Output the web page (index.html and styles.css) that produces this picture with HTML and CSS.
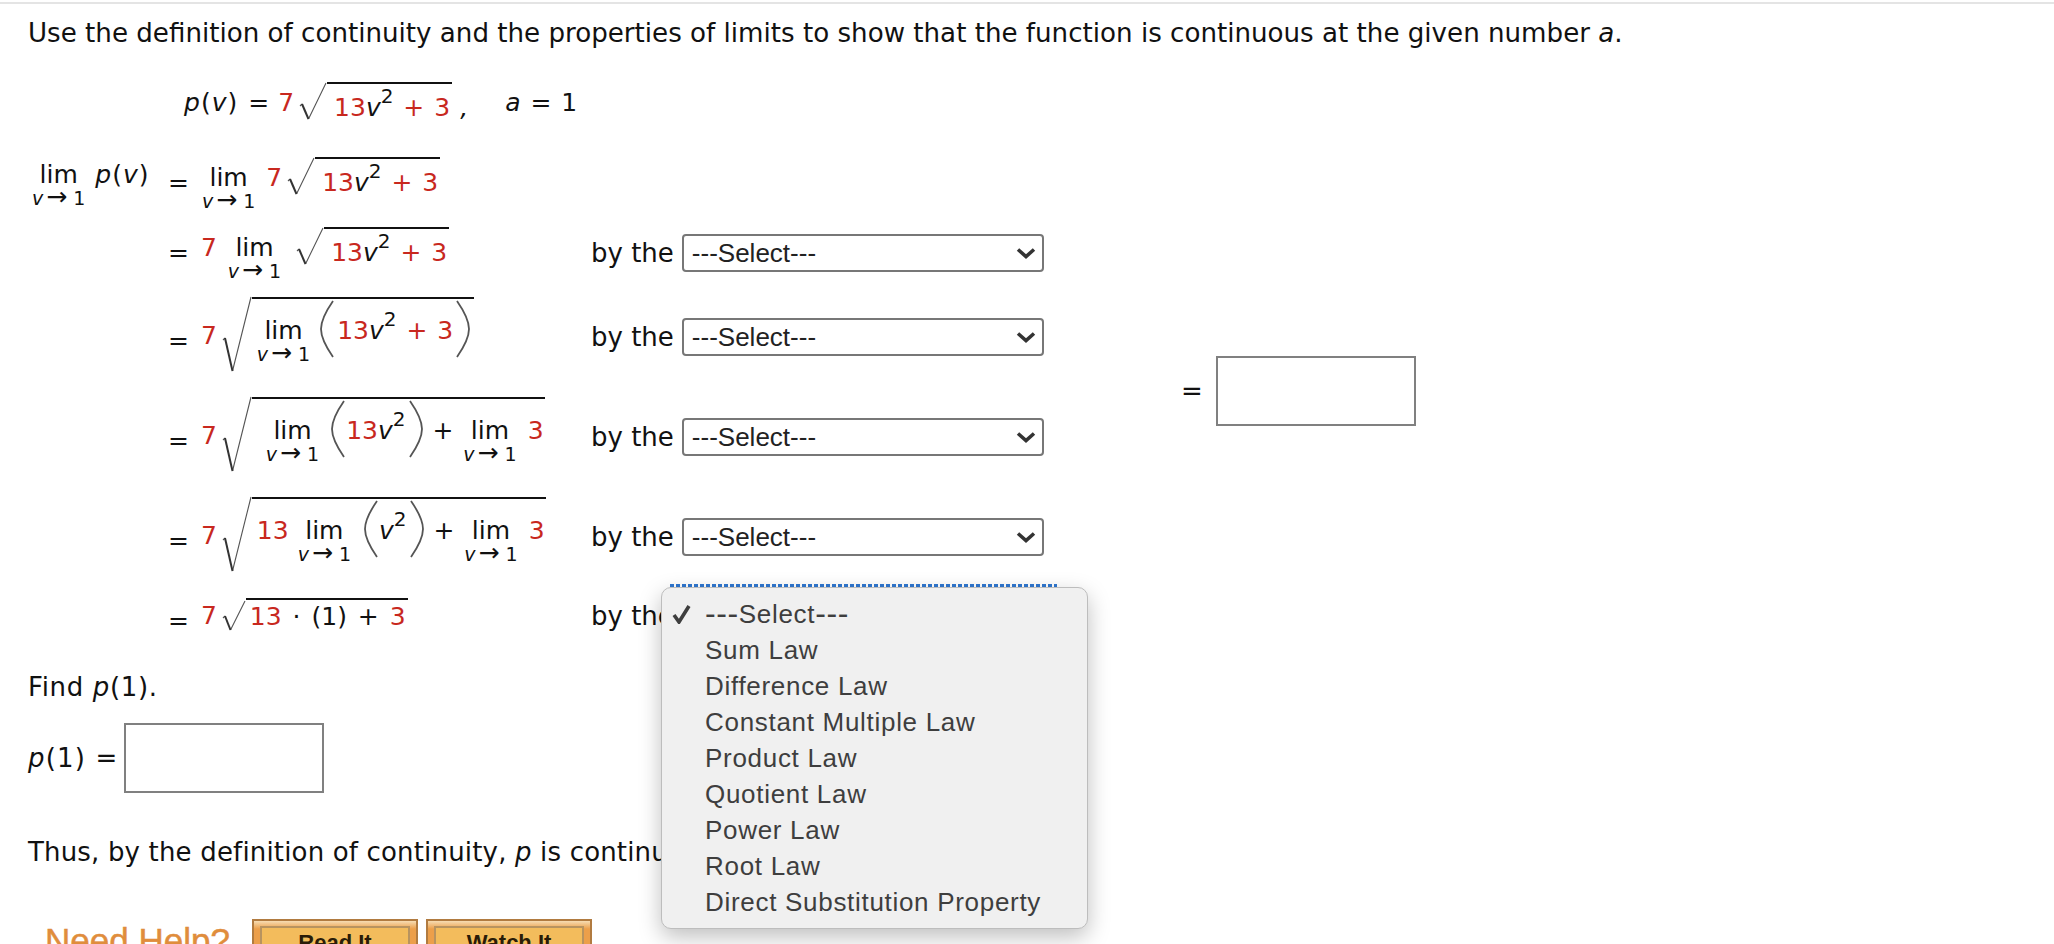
FILE: index.html
```html
<!DOCTYPE html>
<html lang="en">
<head>
<meta charset="utf-8">
<title>Continuity</title>
<link rel="stylesheet" href="styles.css">
</head>
<body>
<div class="topline"></div>
<main class="page">
  <p class="intro">Use the definition of continuity and the properties of limits to show that the function is continuous at the given number <i>a</i>.</p>

  <div class="given">
    <div class="math">
      <span class="pv"><i>p</i>(<i>v</i>)</span><span class="eq eq--g">=</span><span class="r seven">7</span><svg class="radical radical--s" width="28" height="38" viewBox="0 0 28 38"><path class="rad-thin" d="M1 24 L3 22 M9.5 37 L27 1"/><path class="rad-thick" d="M3 22 L9.5 37"/></svg><span class="rad rad--s"><span class="r">13</span><i>v</i><sup>2</sup> <span class="r">+ 3</span></span><span class="comma">,</span><span class="a-eq"><i>a</i> = 1</span>
    </div>
  </div>

  <div class="deriv">
    <div class="lhs"><span class="lim lim--lhs"><span>lim</span><small><i>v</i><b>→</b>1</small></span><span class="pv"><i>p</i>(<i>v</i>)</span></div>
    <div class="math"><span class="eq eq--low">=</span><span class="lim lim--a"><span>lim</span><small><i>v</i><b>→</b>1</small></span><span class="r seven seven--a">7</span><svg class="radical radical--s" width="28" height="38" viewBox="0 0 28 38"><path class="rad-thin" d="M1 24 L3 22 M9.5 37 L27 1"/><path class="rad-thick" d="M3 22 L9.5 37"/></svg><span class="rad rad--s"><span class="r">13</span><i>v</i><sup>2</sup> <span class="r">+ 3</span></span></div>
    <div class="rule-cell"></div>

    <div class="lhs-empty"></div>
    <div class="math"><span class="eq eq--low">=</span><span class="r seven seven--b">7</span><span class="lim lim--b"><span>lim</span><small><i>v</i><b>→</b>1</small></span><svg class="radical radical--s" width="28" height="38" viewBox="0 0 28 38"><path class="rad-thin" d="M1 24 L3 22 M9.5 37 L27 1"/><path class="rad-thick" d="M3 22 L9.5 37"/></svg><span class="rad rad--s"><span class="r">13</span><i>v</i><sup>2</sup> <span class="r">+ 3</span></span></div>
    <div class="rule-cell rule-cell--first"><span class="by">by the</span><span class="sel"><select class="select"><option>---Select---</option></select><svg class="chev" width="20" height="12" viewBox="0 0 20 12"><path d="M2 2.5 L10 9.5 L18 2.5"/></svg></span></div>

    <div class="lhs-empty"></div>
    <div class="math"><span class="eq eq--low">=</span><span class="r seven seven--b">7</span><svg class="radical radical--l" width="30" height="76" viewBox="0 0 30 76"><path class="rad-thin" d="M1 44 L3 42 M10.5 75 L29 1"/><path class="rad-thick" d="M3 42 L10.5 75"/></svg><span class="rad rad--l"><span class="lim lim--c"><span>lim</span><small><i>v</i><b>→</b>1</small></span><svg class="paren paren--l" width="14" height="58" viewBox="0 0 14 58"><path d="M13 1 C4 14 1 22 1 29 C1 36 4 44 13 57"/></svg><span class="r">13</span><i>v</i><sup>2</sup> <span class="r">+ 3</span><svg class="paren paren--r" width="14" height="58" viewBox="0 0 14 58"><path d="M1 1 C10 14 13 22 13 29 C13 36 10 44 1 57"/></svg></span></div>
    <div class="rule-cell rule-cell--tall"><span class="by">by the</span><span class="sel"><select class="select"><option>---Select---</option></select><svg class="chev" width="20" height="12" viewBox="0 0 20 12"><path d="M2 2.5 L10 9.5 L18 2.5"/></svg></span></div>

    <div class="lhs-empty"></div>
    <div class="math"><span class="eq eq--low">=</span><span class="r seven seven--b">7</span><svg class="radical radical--l" width="30" height="76" viewBox="0 0 30 76"><path class="rad-thin" d="M1 44 L3 42 M10.5 75 L29 1"/><path class="rad-thick" d="M3 42 L10.5 75"/></svg><span class="rad rad--l rad--w"><span class="lim lim--d"><span>lim</span><small><i>v</i><b>→</b>1</small></span><svg class="paren paren--l paren--n" width="14" height="58" viewBox="0 0 14 58"><path d="M13 1 C4 14 1 22 1 29 C1 36 4 44 13 57"/></svg><span class="r">13</span><i>v</i><sup>2</sup><svg class="paren paren--r" width="14" height="58" viewBox="0 0 14 58"><path d="M1 1 C10 14 13 22 13 29 C13 36 10 44 1 57"/></svg> + <span class="lim lim--e"><span>lim</span><small><i>v</i><b>→</b>1</small></span><span class="r">3</span></span></div>
    <div class="rule-cell rule-cell--tall"><span class="by">by the</span><span class="sel"><select class="select"><option>---Select---</option></select><svg class="chev" width="20" height="12" viewBox="0 0 20 12"><path d="M2 2.5 L10 9.5 L18 2.5"/></svg></span></div>

    <div class="lhs-empty"></div>
    <div class="math"><span class="eq eq--low">=</span><span class="r seven seven--b">7</span><svg class="radical radical--l" width="30" height="76" viewBox="0 0 30 76"><path class="rad-thin" d="M1 44 L3 42 M10.5 75 L29 1"/><path class="rad-thick" d="M3 42 L10.5 75"/></svg><span class="rad rad--l rad--x"><span class="r">13</span><span class="lim lim--f"><span>lim</span><small><i>v</i><b>→</b>1</small></span><svg class="paren paren--l paren--n" width="14" height="58" viewBox="0 0 14 58"><path d="M13 1 C4 14 1 22 1 29 C1 36 4 44 13 57"/></svg><i>v</i><sup>2</sup><svg class="paren paren--r" width="14" height="58" viewBox="0 0 14 58"><path d="M1 1 C10 14 13 22 13 29 C13 36 10 44 1 57"/></svg> + <span class="lim lim--e"><span>lim</span><small><i>v</i><b>→</b>1</small></span><span class="r">3</span></span></div>
    <div class="rule-cell rule-cell--tall"><span class="by">by the</span><span class="sel"><select class="select"><option>---Select---</option></select><svg class="chev" width="20" height="12" viewBox="0 0 20 12"><path d="M2 2.5 L10 9.5 L18 2.5"/></svg></span></div>

    <div class="lhs-empty"></div>
    <div class="math math--last"><span class="eq eq--low">=</span><span class="r seven seven--b">7</span><svg class="radical radical--t" width="24" height="31" viewBox="0 0 24 31"><path class="rad-thin" d="M1 18 L3 16 M8.5 30 L23 1"/><path class="rad-thick" d="M3 16 L8.5 30"/></svg><span class="rad rad--t"><span class="r">13</span> · (1) + <span class="r">3</span></span></div>
    <div class="rule-cell"><span class="by">by the</span></div>

    <div class="result"><span class="eq-side">=</span><input class="box" type="text"></div>
  </div>

  <p class="find">Find <i>p</i>(1).</p>
  <div class="answer"><span class="answer-label"><i>p</i>(1) = </span><input class="box" type="text"></div>
  <p class="thus">Thus, by the definition of continuity, <i>p</i> is continuous at <i>a</i> = 1.</p>

  <div class="help">
    <span class="help-label">Need Help?</span>
    <a class="btn"><span>Read It</span></a>
    <a class="btn"><span>Watch It</span></a>
  </div>
</main>

<div class="focus-dots"></div>
<ul class="menu">
  <li class="menu-item"><svg class="check" width="20" height="20" viewBox="0 0 20 20"><path d="M2 11 L7 18 L17 2"/></svg><span class="dash">---</span>Select<span class="dash">---</span></li>
  <li class="menu-item">Sum Law</li>
  <li class="menu-item">Difference Law</li>
  <li class="menu-item">Constant Multiple Law</li>
  <li class="menu-item">Product Law</li>
  <li class="menu-item">Quotient Law</li>
  <li class="menu-item">Power Law</li>
  <li class="menu-item">Root Law</li>
  <li class="menu-item">Direct Substitution Property</li>
</ul>
</body>
</html>
```
FILE: styles.css
```css
* { box-sizing: border-box; }
html, body { margin: 0; height: 944px; overflow: hidden; background: #fff; }
body { font-family: "DejaVu Sans", sans-serif; font-size: 26px; color: #111; position: relative; }
.topline { height: 2px; margin-top: 2px; background: #e4e4e4; }
.page { padding-left: 28px; }
.intro { margin: 0; padding-top: 14px; line-height: 30px; height: 78px; font-size: 26.13px; white-space: nowrap; }
.math, .lhs { font-size: 25px; line-height: 24px; white-space: nowrap; word-spacing: 2px; }
.math--last { margin-top: 1px; word-spacing: 3px; }
.pv { letter-spacing: 1px; }
.r { color: #c8281e; }
.given { padding-left: 156px; height: 75px; }
.eq--g { margin-left: 10px; }
.eq--low { vertical-align: -5px; }
.seven { margin-left: 9px; }
.seven--a { margin-left: 11px; }
.seven--b { margin-left: 12px; }
.radical { vertical-align: -9px; margin-left: 5px; }
.radical--l { vertical-align: -28px; }
.radical--t { vertical-align: -7px; }
.rad-thin { fill: none; stroke: #555; stroke-width: 1.1; }
.rad-thick { fill: none; stroke: #333; stroke-width: 2; }
.rad { display: inline-block; border-top: 2px solid #111; }
.rad--s { padding: 12px 2px 0 7px; vertical-align: -5px; }
.rad--l { padding: 1px 4px 0 5px; vertical-align: 5px; }
.rad--w { padding-left: 14px; padding-right: 1px; }
.rad--x { padding-right: 1px; }
.rad--t { padding: 5px 2px 0 4px; vertical-align: -1px; }
sup { font-size: 20px; line-height: 0; vertical-align: 13px; }
.comma { margin-left: 8px; font-style: italic; vertical-align: -5px; }
.a-eq { margin-left: 37px; }
.lim { display: inline-flex; flex-direction: column; align-items: center; }
.lim small { font-size: 19px; line-height: 22px; display: block; }
.lim b { font-weight: normal; font-size: 25px; line-height: 0; margin: 0 6px 0 3px; }
.lim--lhs { margin-right: 10px; }
.lim--a { margin-left: 13px; }
.lim--b { margin-left: 11px; margin-right: 10px; }
.lim--c { margin-right: 10px; }
.lim--d { margin-right: 12px; }
.lim--e { margin-right: 11px; }
.lim--f { margin-left: 9px; margin-right: 13px; }
.paren { vertical-align: -19px; }
.paren path { fill: none; stroke: #555; stroke-width: 1.8; }
.paren--l { margin-right: 3px; }
.paren--n { margin-right: 1px; }
.paren--r { margin-left: 3px; }
.deriv { display: grid; grid-template-columns: 140px 423px 590px auto; grid-template-rows: 70px 69px 100px 100px 101px 75px; }
.lhs, .lhs-empty { grid-column: 1; }
.lhs { padding-top: 6px; padding-left: 4px; }
.rule-cell { display: flex; align-items: center; height: 38px; }
.rule-cell--first { margin-top: 7px; }
.rule-cell--tall { margin-top: 22px; }
.by { font-size: 26px; margin-right: 8px; white-space: nowrap; }
.sel { position: relative; display: block; width: 362px; height: 38px; }
.select { appearance: none; -webkit-appearance: none; width: 100%; height: 100%; background: #fff; border: 2px solid #777; border-radius: 4px; padding: 0 0 0 8px; font-family: "Liberation Sans", sans-serif; font-size: 26px; color: #222; }
.chev { position: absolute; right: 8px; top: 13px; }
.chev path { fill: none; stroke: #333; stroke-width: 3.6; }
.result { grid-column: 4; grid-row: 3 / span 2; display: flex; align-items: center; margin-top: 60px; align-self: start; }
.eq-side { margin-right: 13px; font-size: 26px; }
.box { display: block; width: 200px; height: 70px; border: 2px solid #808080; background: #fff; }
.find { margin: 0; line-height: 30px; height: 51px; letter-spacing: .65px; }
.answer { display: flex; align-items: center; }
.answer-label { width: 96px; white-space: nowrap; letter-spacing: 1.2px; }
.thus { margin: 0; padding-top: 44px; line-height: 30px; white-space: nowrap; letter-spacing: .17px; }
.help { display: flex; align-items: flex-start; padding-left: 17px; margin-top: 52px; }
.help-label { font-family: "Liberation Sans", sans-serif; font-size: 35px; color: #e08d3c; -webkit-text-stroke: .5px #e08d3c; line-height: 40px; width: 207px; margin-top: 2px; }
.btn { display: block; width: 166px; height: 40px; margin-right: 8px; background: linear-gradient(#f6dcb2, #ec9f4a 8px); border: 2px solid #b17b40; padding: 5px 6px 0; }
.btn span { display: block; height: 40px; border: 2px solid #b8935f; background: #f3bc5c; text-align: center; font-family: "Liberation Sans", sans-serif; font-weight: bold; font-size: 22px; color: #2a1c08; line-height: 30px; }
.focus-dots { position: absolute; left: 670px; top: 584px; width: 387px; height: 3px; background: repeating-linear-gradient(90deg, #2f77d0 0 4px, #fff 4px 6px); }
.menu { position: absolute; left: 661px; top: 587px; width: 427px; height: 342px; margin: 0; padding: 8px 0 0 43px; list-style: none; background: #f0f0f0; border: 1px solid #bdbdbd; border-radius: 10px; box-shadow: 0 8px 22px rgba(0,0,0,.25); font-family: "Liberation Sans", sans-serif; font-size: 26px; letter-spacing: .7px; color: #3e3e3e; }
.menu-item { height: 36px; line-height: 36px; position: relative; white-space: nowrap; }
.dash { font-size: 32px; line-height: 0; letter-spacing: .6px; vertical-align: -1px; }
.check { position: absolute; left: -33px; top: 8px; }
.check path { fill: none; stroke: #3e3e3e; stroke-width: 3.6; }
```
